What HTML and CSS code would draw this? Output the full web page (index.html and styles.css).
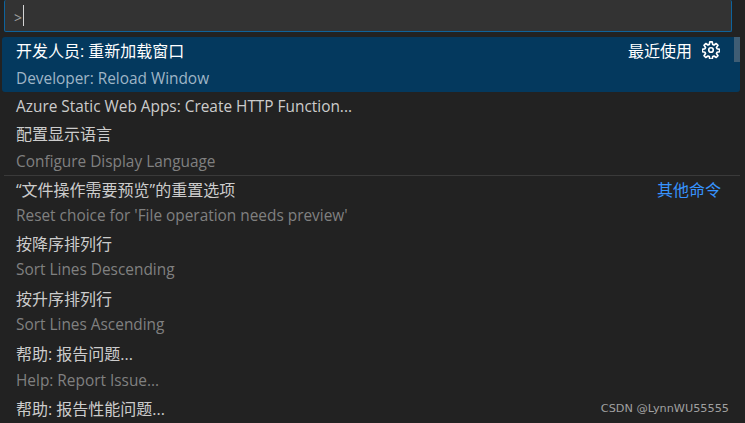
FILE: index.html
```html
<!DOCTYPE html>
<html lang="zh">
<head>
<meta charset="utf-8">
<title>Command Palette</title>
<link rel="stylesheet" href="styles.css">
</head>
<body>
<div class="palette">
  <div class="input-wrap">
    <div class="input"><span class="prompt">&gt;</span><span class="caret"></span></div>
  </div>
  <div class="list">
    <div class="row two selected">
      <div class="line"><span class="label">开发人员: 重新加载窗口</span><span class="meta">最近使用</span>
        <svg class="gear" width="18" height="18" viewBox="0 0 24 24" fill="none" stroke="#fff" stroke-width="2.2" stroke-linejoin="round"><path d="M10.4 1.2h3.2l.7 3.5 1.7.7 3-2 2.3 2.3-2 3 .7 1.7 3.5.7v3.2l-3.5.7-.7 1.7 2 3-2.3 2.3-3-2-1.7.7-.7 3.5h-3.2l-.7-3.5-1.7-.7-3 2-2.3-2.3 2-3-.7-1.7-3.5-.7v-3.2l3.5-.7.7-1.7-2-3 2.3-2.3 3 2 1.7-.7z"/><circle cx="12" cy="12" r="3"/></svg>
      </div>
      <div class="sub">Developer: Reload Window</div>
    </div>
    <div class="row one"><div class="line"><span class="label latin">Azure Static Web Apps: Create HTTP Function...</span></div></div>
    <div class="row two"><div class="line"><span class="label">配置显示语言</span></div><div class="sub">Configure Display Language</div></div>
    <div class="divider"></div>
    <div class="row two tight first"><div class="line"><span class="label">“文件操作需要预览”的重置选项</span><a class="link">其他命令</a></div><div class="sub">Reset choice for 'File operation needs preview'</div></div>
    <div class="row two tight"><div class="line"><span class="label">按降序排列行</span></div><div class="sub">Sort Lines Descending</div></div>
    <div class="row two tight"><div class="line"><span class="label">按升序排列行</span></div><div class="sub">Sort Lines Ascending</div></div>
    <div class="row two mid"><div class="line"><span class="label">帮助: 报告问题...</span></div><div class="sub">Help: Report Issue...</div></div>
    <div class="row two"><div class="line"><span class="label">帮助: 报告性能问题...</span></div></div>
  </div>
  <div class="scroll-thumb"></div>
  <div class="watermark">CSDN @LynnWU55555</div>
</div>
</body>
</html>
```
FILE: styles.css
```css
html, body { margin: 0; padding: 0; height: 100%; }
body {
  background: #222222;
  overflow: hidden;
  font-family: "Open Sans", "Noto Sans CJK SC", sans-serif;
  font-size: 16px;
  color: #cccccc;
}
.palette { position: relative; width: 745px; height: 423px; overflow: hidden; }
.input-wrap { padding: 0 13px 0 4px; height: 37px; box-sizing: border-box; }
.input {
  height: 32px;
  box-sizing: border-box;
  background: #333333;
  border: 1px solid #0e639c;
  border-top: 0;
  border-radius: 2px;
  display: flex;
  align-items: center;
  padding: 0 0 0 9px;
}
.prompt { font-size: 14px; color: #a0a0a0; line-height: 18px; padding-top: 5px; }
.caret { width: 1px; height: 21px; background: #d4d4d4; margin-left: 1px; }
.list { margin: 0 5px 0 2px; }
.row { padding: 0 18px 0 14px; box-sizing: border-box; }
.row.two { height: 55px; }
.row.one { height: 28px; }
.row.first { height: 54px; }
.line { display: flex; align-items: center; height: 26px; }
.one .line { height: 28px; }
.label { color: #cccccc; flex: 1; white-space: nowrap; }
.latin { font-size: 15.4px; }
.sub { height: 29px; line-height: 32px; font-size: 15.4px; color: #808080; white-space: nowrap; }
.tight .sub { line-height: 27px; }
.mid .sub { line-height: 30px; }
.selected { background: #04395e; border-radius: 3px; }
.selected .label, .selected .meta { color: #ffffff; }
.selected .sub { color: #9fb5c6; }
.meta { color: #fff; }
.gear { margin-left: 10px; margin-right: 2px; }
.link { color: #3794ff; margin-right: 1px; }
.divider { height: 1px; background: #3a3a3a; margin-left: 2px; }
.scroll-thumb { position: absolute; left: 734px; top: 37px; width: 6px; height: 25px; background: #3f5d74; }
.watermark {
  position: absolute;
  right: 16px;
  top: 402px;
  font-family: "DejaVu Sans", sans-serif;
  font-size: 11.25px;
  color: #a0a0a0;
  white-space: nowrap;
}
```
